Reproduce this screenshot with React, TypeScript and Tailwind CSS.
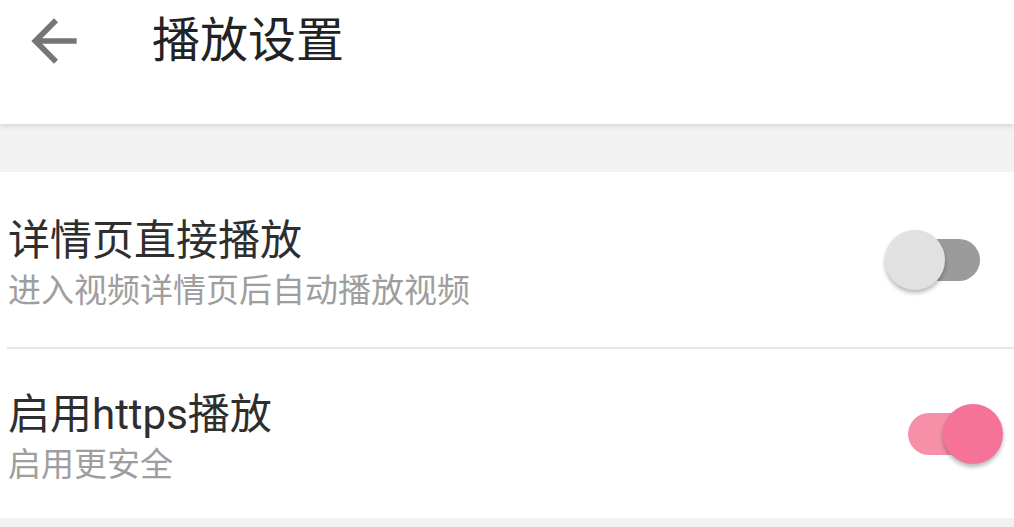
import React from "react";

function Toggle({ on }: { on: boolean }) {
  return (
    <div className="relative w-[120px] h-[62px] shrink-0">
      <div
        className={`absolute left-[24px] top-[10px] w-[72px] h-[42px] rounded-full ${on ? "bg-[#f590a8]" : "bg-[#9b9b9b]"}`}
      />
      <div
        className={`absolute top-[1px] w-[60px] h-[60px] rounded-full ${on ? "left-[59px] bg-[#f57399]" : "left-[1px] bg-[#e1e1e1]"} shadow-[0_3px_4px_rgba(0,0,0,0.28)]`}
      />
    </div>
  );
}

function Row({ title, sub, on }: { title: string; sub: string; on: boolean }) {
  return (
    <div className="flex items-center justify-between h-full pl-[8px] pr-[10px]">
      <div className="flex flex-col pt-[8px]">
        <div className="text-[42px] leading-[54px] text-[#2e2e2e]">{title}</div>
        <div className="text-[33px] leading-[46px] text-[#9e9e9e]">{sub}</div>
      </div>
      <Toggle on={on} />
    </div>
  );
}

export default function App() {
  return (
    <div
      className="w-[1014px] h-[527px] overflow-hidden bg-[#f2f2f2] flex flex-col"
      style={{ fontFamily: 'Roboto, "Noto Sans CJK SC", sans-serif' }}
    >
      <div className="relative z-10 h-[124px] bg-white shadow-[0_2px_5px_rgba(0,0,0,0.12)] flex items-start pt-[8px]">
        <div className="w-[152px] h-[66px] flex items-center pl-[20px]">
          <svg width="68" height="68" viewBox="0 0 24 24" fill="#757575">
            <path d="M20 11H7.83l5.59-5.59L12 4l-8 8 8 8 1.41-1.41L7.83 13H20v-2z" />
          </svg>
        </div>
        <div className="h-[66px] flex items-center text-[48px] text-[#222]">播放设置</div>
      </div>
      <div className="h-[48px] shrink-0" />
      <div className="bg-white h-[346px] flex flex-col">
        <div className="h-[175px]">
          <Row title="详情页直接播放" sub="进入视频详情页后自动播放视频" on={false} />
        </div>
        <div className="ml-[7px] h-[2px] bg-[#e6e6e6]" />
        <div className="h-[169px]">
          <Row title="启用https播放" sub="启用更安全" on={true} />
        </div>
      </div>
    </div>
  );
}
